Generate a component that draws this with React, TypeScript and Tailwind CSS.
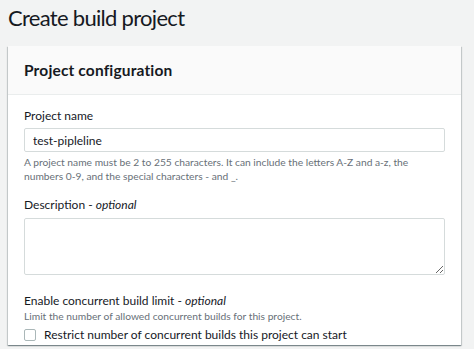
export default function App() {
  return (
    <div className="h-[349px] w-[474px] overflow-hidden bg-[#f2f3f3] px-2 font-['Lato',sans-serif] text-[#16191f]">
      <h1 className="h-[46px] pt-[1px] text-[22px] font-normal leading-[34px] tracking-[-0.7px]">Create build project</h1>

      <section className="w-[453px] bg-white shadow-[0_1px_1px_0_rgba(0,28,36,0.3),1px_1px_1px_0_rgba(0,28,36,0.15),-1px_1px_1px_0_rgba(0,28,36,0.15)]">
        <div className="flex h-[49px] items-center border-b border-[#eaeded] bg-[#fafafa] px-4">
          <h2 className="text-[15.5px] font-bold leading-[24px] tracking-[0.15px]">Project configuration</h2>
        </div>

        <div className="px-4 pt-[11px]">
          <label className="block text-[12px] leading-[20px]">Project name</label>
          <input
            className="mt-[2px] block h-[24px] w-[421px] rounded-[2px] border border-[#d5dbdb] px-[8px] text-[12px] text-[#16191f] outline-none"
            defaultValue="test-pipleline"
          />
          <p className="mt-[3px] text-[10.25px] leading-[14px] text-[#687078]">
            A project name must be 2 to 255 characters. It can include the letters A-Z and a-z, the numbers 0-9, and
            the special characters - and _.
          </p>

          <label className="mt-[12px] block text-[12px] leading-[20px]">
            Description - <i>optional</i>
          </label>
          <textarea className="mt-[3px] block h-[57px] w-[421px] resize rounded-[2px] border border-[#d5dbdb] px-[8px] outline-none" />

          <div className="mt-[17px] text-[12px] leading-[18px]">
            Enable concurrent build limit - <i>optional</i>
          </div>
          <p className="text-[10.25px] leading-[12px] text-[#687078]">Limit the number of allowed concurrent builds for this project.</p>
          <label className="mt-[3px] flex items-center gap-[8px] text-[12px] leading-[20px]">
            <span className="block h-[12px] w-[12px] rounded-[2px] border border-[#aab7b8] bg-white" />
            Restrict number of concurrent builds this project can start
          </label>
        </div>
      </section>
    </div>
  );
}
